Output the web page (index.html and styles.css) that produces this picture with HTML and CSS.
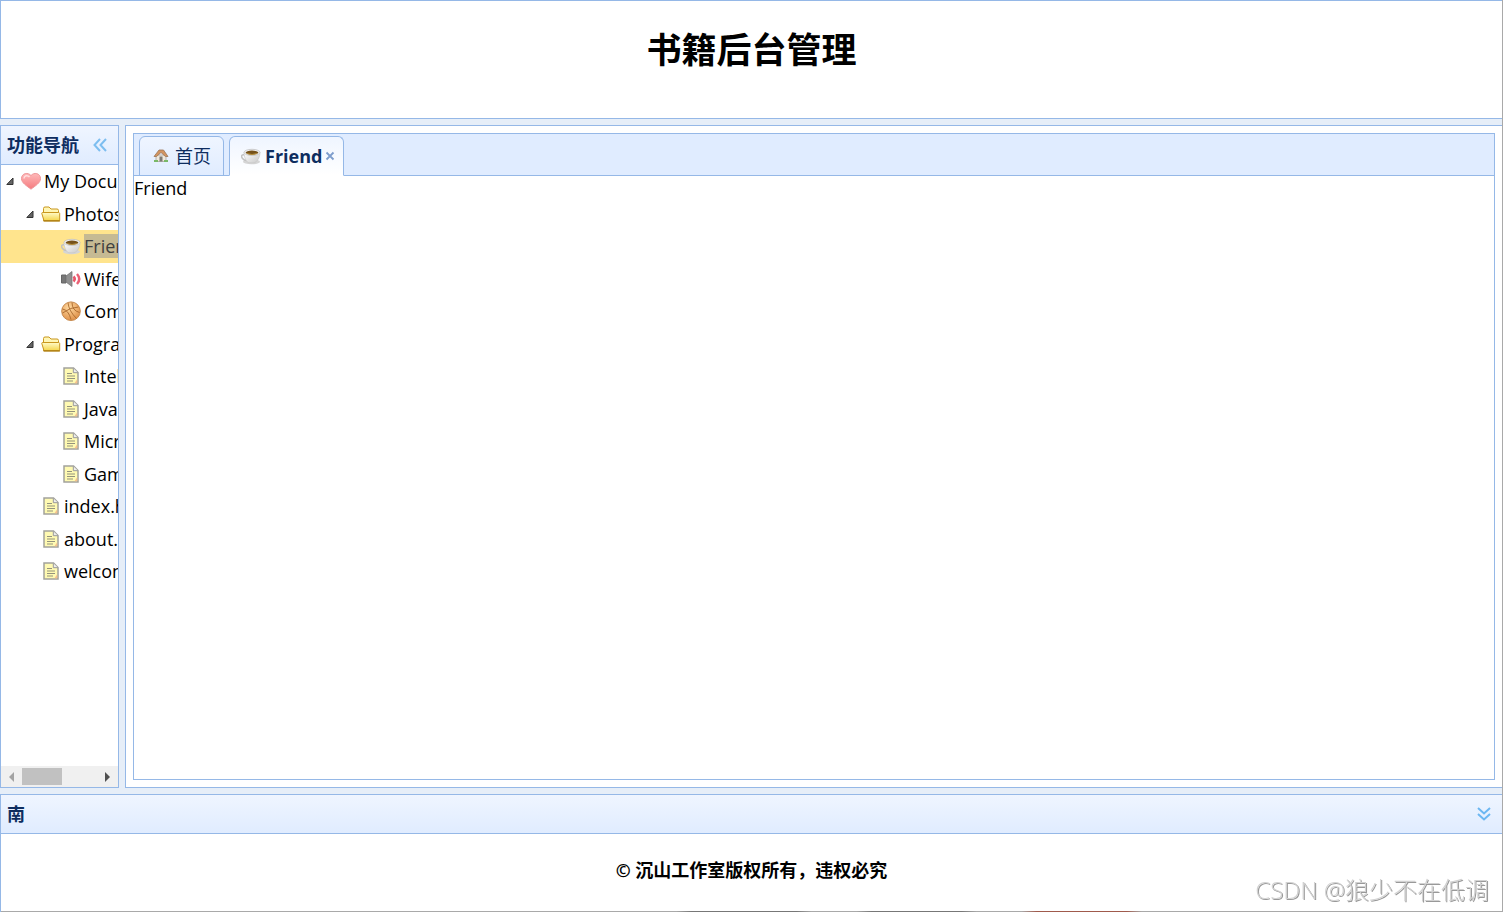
FILE: index.html
```html
<!DOCTYPE html>
<html lang="zh-CN">
<head>
  <meta charset="UTF-8">
  <meta name="viewport" content="width=device-width, initial-scale=1.0">
  <title>书籍后台管理</title>
  <link rel="stylesheet" href="styles.css">
</head>
<body>
  <!-- shared icons -->
  <svg class="sprite" aria-hidden="true">
    <defs>
      <linearGradient id="gold" x1="0" y1="0" x2="0" y2="1"><stop offset="0" stop-color="#fffbc8"/><stop offset="1" stop-color="#f4d548"/></linearGradient>
      <linearGradient id="cupFill" x1="0" y1="0" x2="1" y2="1"><stop offset="0" stop-color="#ffffff"/><stop offset="1" stop-color="#c9c9c9"/></linearGradient>
      <linearGradient id="pink" x1="0" y1="0" x2="0" y2="1"><stop offset="0" stop-color="#ffb9b9"/><stop offset="1" stop-color="#f47a7e"/></linearGradient>
      <radialGradient id="orange" cx="0.4" cy="0.3" r="0.7"><stop offset="0" stop-color="#ffd9a0"/><stop offset="1" stop-color="#e0924a"/></radialGradient>
    </defs>
    <symbol id="arrow" viewBox="0 0 20 20">
      <path d="M12 7v6.500H5.800z" fill="#666" stroke="#333" stroke-width="1" stroke-linejoin="round"/>
    </symbol>
    <symbol id="heart" viewBox="0 0 20 20">
      <path d="M10 18.200C6 15 .5 12 .5 7.600.5 2 7.300 1 10 4.600c2.700-3.600 9.500-2.600 9.500 3 0 4.400-5.500 7.400-9.500 10.600z" fill="url(#pink)" stroke="#ee9598" stroke-width="1"/>
      <path d="M3 7.500c0-3 3.500-3.800 5.500-1.500" fill="none" stroke="#ffdede" stroke-width="1.500"/>
    </symbol>
    <symbol id="folder" viewBox="0 0 20 20">
      <path d="M2.500 16.500V4.500q0-1.500 1.500-1.500h4l2 2h6q1.500 0 1.500 1.500v10z" fill="#fff6b5" stroke="#c9971e"/>
      <path d="M3 16.800L.8 9.500q-.2-1 1-1h15.700q1 0 1.200 1v7.300z" fill="url(#gold)" stroke="#c9971e"/>
      <path d="M2.500 16.900h16.300" stroke="#ab7c12" stroke-width="1.300"/>
    </symbol>
    <symbol id="cup" viewBox="0 0 20 20">
      <ellipse cx="10.500" cy="15.800" rx="8.500" ry="2.500" fill="#d5d5d5"/>
      <path d="M5 9.500c-4-2-5.500.3-3.500 3 1 1.500 3 2 5 2.200" fill="none" stroke="#c2c2c2" stroke-width="1.500"/>
      <path d="M3 6.500c0 4 2 9.800 5 10.300h5c3.300-.6 6-6 6-10.300z" fill="url(#cupFill)" stroke="#c5c5c5" stroke-width=".6"/>
      <ellipse cx="11" cy="6.400" rx="8" ry="3.100" fill="#f3f3f3" stroke="#bababa" stroke-width=".7"/>
      <ellipse cx="11" cy="6.600" rx="6.400" ry="2" fill="#75521b"/>
      <path d="M6 7.500q5 2 10 0" fill="none" stroke="#b38b37"/>
    </symbol>
    <symbol id="speaker" viewBox="0 0 20 20">
      <path d="M.5 6h4.500v8H.5z" fill="#777" stroke="#666"/>
      <path d="M5 7l6-4.500v15L5 13z" fill="#909090" stroke="#777" stroke-width=".8"/>
      <path d="M12.500 7.500q2.500 2.500 0 5" fill="none" stroke="#e8566a" stroke-width="2.500"/>
      <path d="M16 5q4.500 5 0 10" fill="none" stroke="#ea6074" stroke-width="2.500"/>
    </symbol>
    <symbol id="ball" viewBox="0 0 20 20">
      <circle cx="10" cy="10.200" r="9.300" fill="url(#orange)" stroke="#c68a4f"/>
      <path d="M1.500 12q8-6 16-6M7 2q1 8 8.500 15.500M1.500 8q6 1 8.500 10.500M11 1.500q0 8 7.500 10" fill="none" stroke="#a8682c" stroke-width=".9"/>
    </symbol>
    <symbol id="file" viewBox="0 0 20 20">
      <path d="M3 2h9.500l4.500 4.500V18H3z" fill="#fffab2" stroke="#a2a29c" stroke-width="1.500"/>
      <path d="M12.300 2.200v4.500H17" fill="#eee" stroke="#999"/>
      <path d="M6 7.500h5M6 10h8M6 12.500h8M6 15h6" stroke="#93937d" stroke-width="1.100"/>
      <path d="M13.500 17.200l2.700-4v4z" fill="#f8c08c"/>
    </symbol>
    <symbol id="home" viewBox="0 0 20 20">
      <path d="M5 9h10v6.500H5z" fill="#efe8dc" stroke="#aaa59c" stroke-width=".8"/>
      <path d="M3 10.500L8 4h4.500L17 10.500h-2.500L10 6.500 5.500 10.500z" fill="#d39460" stroke="#9a7556" stroke-width=".8"/>
      <path d="M8.500 10.500h3v5h-3z" fill="#7d7a74"/>
      <path d="M3 15h4M13 15h4" stroke="#79b867" stroke-width="1.800"/>
    </symbol>
  </svg>

  <header class="panel north">
    <h1>书籍后台管理</h1>
  </header>

  <main class="middle">
    <nav class="panel west">
      <div class="panel-header">
        <h2>功能导航</h2>
        <button type="button" class="tool" aria-label="collapse left">
          <svg viewBox="0 0 16 16"><path d="M8 2L2.500 8 8 14M14 2L8.500 8l5.500 6" fill="none" stroke="#7dbef0" stroke-width="2"/></svg>
        </button>
      </div>
      <ul class="tree">
        <li><svg><use href="#arrow"/></svg><svg><use href="#heart"/></svg><span>My Documents</span></li>
        <li class="level-1"><svg><use href="#arrow"/></svg><svg><use href="#folder"/></svg><span>Photos</span></li>
        <li class="level-3 selected"><svg><use href="#cup"/></svg><span>Friend</span></li>
        <li class="level-3"><svg><use href="#speaker"/></svg><span>Wife</span></li>
        <li class="level-3"><svg><use href="#ball"/></svg><span>Company</span></li>
        <li class="level-1"><svg><use href="#arrow"/></svg><svg><use href="#folder"/></svg><span>Program Files</span></li>
        <li class="level-3"><svg><use href="#file"/></svg><span>Intel</span></li>
        <li class="level-3"><svg><use href="#file"/></svg><span>Java</span></li>
        <li class="level-3"><svg><use href="#file"/></svg><span>Microsoft Office</span></li>
        <li class="level-3"><svg><use href="#file"/></svg><span>Games</span></li>
        <li class="level-2"><svg><use href="#file"/></svg><span>index.html</span></li>
        <li class="level-2"><svg><use href="#file"/></svg><span>about.html</span></li>
        <li class="level-2"><svg><use href="#file"/></svg><span>welcome.html</span></li>
      </ul>
      <div class="scrollbar">
        <button type="button" aria-label="scroll left"><svg viewBox="0 0 20 20"><path d="M13 5v10L8 10z" fill="#a3a3a3"/></svg></button>
        <div class="track"><div class="thumb"></div></div>
        <button type="button" aria-label="scroll right"><svg viewBox="0 0 20 20"><path d="M7 5v10l5-5z" fill="#505050"/></svg></button>
      </div>
    </nav>

    <section class="panel center">
      <div class="tabs">
        <div class="tabs-header">
          <div class="tab">
            <button type="button" class="tab-title"><svg><use href="#home"/></svg>首页</button>
          </div>
          <div class="tab active">
            <button type="button" class="tab-title"><svg><use href="#cup"/></svg>Friend</button>
            <button type="button" class="tab-close" aria-label="close"><svg viewBox="0 0 10 10"><path d="M1.500 1.500l7 7M8.500 1.500l-7 7" stroke="#7d9dcd" stroke-width="1.800"/></svg></button>
          </div>
        </div>
        <div class="tab-content">Friend</div>
      </div>
    </section>
  </main>

  <footer class="panel south">
    <div class="panel-header">
      <h2>南</h2>
      <button type="button" class="tool" aria-label="collapse down">
        <svg viewBox="0 0 16 16"><path d="M2 2l6 5.500L14 2M2 8l6 5.500L14 8" fill="none" stroke="#6cb7f2" stroke-width="2"/></svg>
      </button>
    </div>
    <p class="copyright">© 沉山工作室版权所有，违权必究</p>
    <div class="edge"></div>
  </footer>
  <div class="watermark">CSDN @狼少不在低调</div>
</body>
</html>
```

FILE: styles.css
```css
* {
  box-sizing: border-box;
}
body {
  font-family: 'Open Sans', 'Noto Sans CJK SC', sans-serif;
  font-size: 18px;
  line-height: 24px;
  margin: 0;
  height: 100vh;
  display: flex;
  flex-direction: column;
  gap: 6px;
  color: #000;
  background: #e6eef8;
  border-right: 1px solid #a9a9a9;
  overflow: hidden;
}
button {
  font: inherit;
  color: inherit;
  background: none;
  border: 0;
  padding: 0;
  cursor: pointer;
}
svg {
  display: block;
  flex: none;
  width: 20px;
  height: 20px;
}
.sprite {
  position: absolute;
  width: 0;
  height: 0;
}

/* panels */
.panel {
  background: #fff;
  border: 1px solid #95b8e7;
}
.panel-header {
  display: flex;
  align-items: center;
  justify-content: space-between;
  padding: 7px 10px 7px 6px;
  background: linear-gradient(to bottom, #eff5ff, #e0ecff);
  border-bottom: 1px solid #95b8e7;
}
.panel-header h2 {
  margin: 0;
  font-size: 18px;
  color: #0e2d5f;
  white-space: nowrap;
}
.tool svg {
  width: 16px;
  height: 16px;
}
.north {
  padding: 25px 0 44px;
  border-right: 0;
}
.north h1 {
  margin: 0;
  font-size: 35px;
  line-height: 48px;
  text-align: center;
}
.middle {
  flex: 1;
  min-height: 0;
  display: flex;
  gap: 6px;
}

/* navigation tree */
.west {
  width: 119px;
  flex: none;
  display: flex;
  flex-direction: column;
}
.tree {
  flex: 1;
  list-style: none;
  margin: 0;
  padding: 0;
  overflow: hidden;
}
.tree li {
  display: flex;
  height: 33px;
  padding-top: 4px;
  white-space: nowrap;
  cursor: pointer;
}
.tree li:nth-child(even) {
  height: 32px;
}
.tree svg {
  margin-top: 2px;
}
.tree span {
  height: 24px;
  margin-left: 3px;
}
.tree .level-1 {
  padding-left: 20px;
}
.tree .level-2 {
  padding-left: 40px;
}
.tree .level-3 {
  padding-left: 60px;
}
.tree .selected {
  background: #ffe48d;
}
.selected span {
  color: #404040;
  background: #c6ba93;
}
.scrollbar {
  display: flex;
  height: 21px;
  background: #f0f0f0;
}
.track {
  flex: 1;
  padding: 2px 0 2px 1px;
}
.thumb {
  width: 40px;
  height: 17px;
  background: #c1c1c1;
}

/* tabs */
.center {
  flex: 1;
  min-width: 0;
  display: flex;
  padding: 7px;
  border-right: 0;
}
.tabs {
  flex: 1;
  display: flex;
  flex-direction: column;
  border: 1px solid #95b8e7;
}
.tabs-header {
  display: flex;
  gap: 5px;
  padding: 2px 5px 0;
  background: #e0ecff;
  border-bottom: 1px solid #95b8e7;
}
.tab {
  display: flex;
  align-items: center;
  height: 40px;
  margin-bottom: -1px;
  padding: 0 12px 0 11px;
  color: #0e2d5f;
  background: linear-gradient(to bottom, #eff5ff, #e0ecff);
  border: 1px solid #95b8e7;
  border-radius: 6px 6px 0 0;
}
.tab.active {
  padding-right: 8px;
  font-weight: bold;
  background: linear-gradient(to bottom, #eff5ff, #fff);
  border-bottom-color: #fff;
}
.tab-title {
  display: flex;
  align-items: center;
  gap: 4px;
}
.tab-close {
  margin-left: 3px;
}
.tab-close svg {
  width: 10px;
  height: 10px;
}
.tab-content {
  flex: 1;
}

/* footer */
.south {
  border-right: 0;
  border-bottom: 0;
}
.copyright {
  margin: 0;
  padding: 24px 0 29px;
  font-weight: bold;
  text-align: center;
}
.edge {
  height: 1px;
  background: linear-gradient(to right, #a9a9a9 45%, #777 46% 53%, #a9a9a9 54% 57%, #777 58% 64%, #a9a9a9 65% 68%, #a05a4c 69% 75%, #a9a9a9 76%);
}
.watermark {
  position: fixed;
  right: 14px;
  bottom: 6px;
  font-size: 24px;
  font-weight: 300;
  line-height: 32px;
  color: #d2d2d2;
  text-shadow: 1px 1px 0 #999;
}
```
